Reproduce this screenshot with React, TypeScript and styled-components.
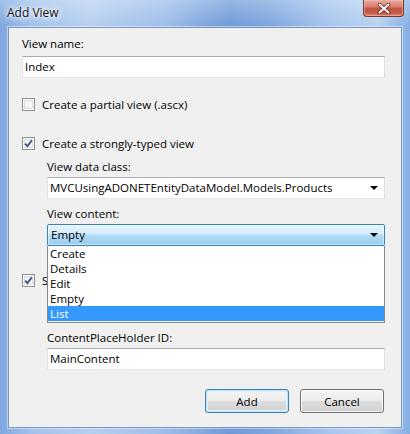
import React from "react";
import styled, { createGlobalStyle } from "styled-components";

const FONT = `"Open Sans", "Noto Sans", "DejaVu Sans", sans-serif`;

const Global = createGlobalStyle`
  html, body { margin: 0; padding: 0; background: #ffffff; }
  body { font-family: ${FONT}; }
`;

const Window = styled.div`
  position: relative;
  width: 410px;
  height: 434px;
  box-sizing: border-box;
  display: flex;
  flex-direction: column;
  overflow: hidden;
  font-family: ${FONT};
  font-size: 11.5px;
  color: #000;
  background:
    linear-gradient(180deg, rgba(255, 255, 255, 0.28) 0px, rgba(255, 255, 255, 0) 26px),
    linear-gradient(90deg, #7fa8df 0%, #a3c2eb 8%, #b6cff0 22%, #9dbde9 40%, #6f9ad8 56%, #7ea6de 66%, #a6c5ee 80%, #b9d2f1 92%, #86aee4 100%);
`;

const TitleBar = styled.div`
  height: 27px;
  flex: none;
  display: flex;
  align-items: flex-start;
  padding: 0 6px 0 7px;
  box-sizing: border-box;
`;

const Title = styled.div`
  line-height: 25px;
  font-size: 12px;
  color: #111;
  text-shadow: 0 0 6px #ffffff, 0 0 3px #ffffff, 0 0 10px rgba(255, 255, 255, 0.9);
`;

const CloseButton = styled.div`
  margin-left: auto;
  width: 41px;
  height: 17px;
  box-sizing: border-box;
  border: 1px solid #7b3a30;
  border-top: none;
  border-radius: 0 0 4px 4px;
  background: linear-gradient(180deg, #e9a99c 0%, #d98373 40%, #c0503c 55%, #c85a45 80%, #dd8470 100%);
  box-shadow: inset 0 0 0 1px rgba(255, 200, 190, 0.45);
  display: flex;
  align-items: center;
  justify-content: center;
`;

const Panel = styled.div`
  margin: 0 8px;
  height: 401px;
  flex: none;
  box-sizing: border-box;
  background: #f0f0f0;
  border: 1px solid #7d97bb;
  box-shadow: 0 0 0 1px rgba(255, 255, 255, 0.45);
  padding: 0 16px 0 13px;
  display: flex;
  flex-direction: column;
`;

const Label = styled.div<{ $mt: number }>`
  margin-top: ${(p) => p.$mt}px;
  line-height: 15px;
  height: 15px;
  white-space: nowrap;
`;

const TextBox = styled.div<{ $mt: number }>`
  margin-top: ${(p) => p.$mt}px;
  height: 22px;
  box-sizing: border-box;
  background: #ffffff;
  border: 1px solid;
  border-color: #abadb3 #dbdfe6 #e3e9ef #e2e3ea;
  padding: 0 2px;
  line-height: 20px;
  white-space: nowrap;
  overflow: hidden;
`;

const SelectBox = styled.div<{ $mt: number }>`
  margin-top: ${(p) => p.$mt}px;
  height: 22px;
  box-sizing: border-box;
  background: #ffffff;
  border: 1px solid;
  border-color: #abadb3 #dbdfe6 #e3e9ef #e2e3ea;
  padding: 0 2px;
  display: flex;
  align-items: center;
  white-space: nowrap;
`;

const SelectText = styled.span`
  flex: 1;
  line-height: 20px;
  overflow: hidden;
`;

const Arrow = styled.span`
  flex: none;
  width: 0;
  height: 0;
  margin-right: 4px;
  border-left: 4px solid transparent;
  border-right: 4px solid transparent;
  border-top: 4px solid #000;
`;

const ComboWrap = styled.div<{ $mt: number }>`
  position: relative;
  margin-top: ${(p) => p.$mt}px;
  height: 22px;
  z-index: 5;
`;

const Combo = styled.div`
  height: 22px;
  box-sizing: border-box;
  border: 1px solid #3c7fb1;
  border-radius: 2px;
  background: linear-gradient(180deg, #e5f4fc 0%, #d3ecfa 45%, #b4ddf5 52%, #97cbee 100%);
  box-shadow: inset 0 0 0 1px rgba(255, 255, 255, 0.5);
  padding: 0 2px 0 3px;
  display: flex;
  align-items: center;
`;

const DropList = styled.div`
  position: absolute;
  top: 22px;
  left: 0;
  right: 0;
  box-sizing: border-box;
  background: #ffffff;
  border: 1px solid #828790;
  border-top: none;
  padding-bottom: 1px;
`;

const ListItem = styled.div<{ $selected?: boolean }>`
  height: 15px;
  line-height: 15px;
  padding-left: 2px;
  background: ${(p) => (p.$selected ? "#3399ff" : "transparent")};
  color: ${(p) => (p.$selected ? "#ffffff" : "#000000")};
`;

const CheckRow = styled.div<{ $mt: number }>`
  margin-top: ${(p) => p.$mt}px;
  height: 16px;
  display: flex;
  align-items: center;
  gap: 7px;
  white-space: nowrap;
`;

const CheckBoxBox = styled.span`
  flex: none;
  width: 13px;
  height: 13px;
  box-sizing: border-box;
  border: 1px solid #8e8f8f;
  background: #f4f4f4;
  box-shadow: inset 0 0 0 1px #ffffff, inset 0 0 0 2px #dcdcdc;
  display: flex;
  align-items: center;
  justify-content: center;
`;

const Indent = styled.div`
  padding-left: 25px;
  display: flex;
  flex-direction: column;
`;

const MasterRow = styled.div<{ $mt: number }>`
  margin-top: ${(p) => p.$mt}px;
  height: 22px;
  display: flex;
  gap: 6px;
`;

const Grow = styled.div`
  flex: 1;
  display: flex;
  flex-direction: column;
`;

const ButtonRow = styled.div<{ $mt: number }>`
  margin-top: ${(p) => p.$mt}px;
  display: flex;
  justify-content: flex-end;
  gap: 11px;
  padding-right: 1px;
`;

const Button = styled.div<{ $default?: boolean; $w?: number; $h?: number }>`
  width: ${(p) => p.$w ?? 84}px;
  height: ${(p) => p.$h ?? 24}px;
  box-sizing: border-box;
  border: 1px solid ${(p) => (p.$default ? "#3c7fb1" : "#707070")};
  border-radius: 3px;
  background: linear-gradient(180deg, #f4f4f4 0%, #ececec 48%, #dedede 52%, #d0d0d0 100%);
  box-shadow: ${(p) =>
    p.$default
      ? "inset 0 0 0 1px #c3e4f6, inset 0 0 0 2px #dff2fc"
      : "inset 0 0 0 1px rgba(255,255,255,0.85)"};
  display: flex;
  align-items: center;
  justify-content: center;
  line-height: 15px;
`;

const CheckMark = () => (
  <svg width="9" height="9" viewBox="0 0 9 9">
    <path d="M1.2 4.6 L3.4 7.2 L7.8 1.4" fill="none" stroke="#3b4f8a" strokeWidth="1.8" strokeLinejoin="round" />
  </svg>
);

const CheckBox = ({ checked }: { checked?: boolean }) => (
  <CheckBoxBox>{checked ? <CheckMark /> : null}</CheckBoxBox>
);

const CloseGlyph = () => (
  <svg width="14" height="11" viewBox="0 0 14 11">
    <path d="M2.5 1.5 L11.5 9.5 M11.5 1.5 L2.5 9.5" stroke="#5a2218" strokeWidth="3.6" strokeLinecap="round" />
    <path d="M2.5 1.5 L11.5 9.5 M11.5 1.5 L2.5 9.5" stroke="#ffffff" strokeWidth="2" strokeLinecap="round" />
  </svg>
);

const items = ["Create", "Details", "Edit", "Empty", "List"];

export default function App() {
  return (
    <>
      <Global />
      <Window>
        <TitleBar>
          <Title>Add View</Title>
          <CloseButton>
            <CloseGlyph />
          </CloseButton>
        </TitleBar>
        <Panel>
          <Label $mt={8}>View name:</Label>
          <TextBox $mt={5}>Index</TextBox>

          <CheckRow $mt={18}>
            <CheckBox />
            <span>Create a partial view (.ascx)</span>
          </CheckRow>

          <CheckRow $mt={23}>
            <CheckBox checked />
            <span>Create a strongly-typed view</span>
          </CheckRow>

          <Indent>
            <Label $mt={8}>View data class:</Label>
            <SelectBox $mt={3}>
              <SelectText>MVCUsingADONETEntityDataModel.Models.Products</SelectText>
              <Arrow />
            </SelectBox>
            <Label $mt={7}>View content:</Label>
            <ComboWrap $mt={3}>
              <Combo>
                <SelectText>Empty</SelectText>
                <Arrow />
              </Combo>
              <DropList>
                {items.map((it) => (
                  <ListItem key={it} $selected={it === "List"}>
                    {it}
                  </ListItem>
                ))}
              </DropList>
            </ComboWrap>
          </Indent>

          <CheckRow $mt={26}>
            <CheckBox checked />
            <span>S</span>
          </CheckRow>

          <Indent>
            <MasterRow $mt={6}>
              <Grow>
                <TextBox $mt={0} />
              </Grow>
              <Button $w={26} $h={22} />
            </MasterRow>
            <Label $mt={14}>ContentPlaceHolder ID:</Label>
            <TextBox $mt={3}>MainContent</TextBox>
          </Indent>

          <ButtonRow $mt={19}>
            <Button $default>Add</Button>
            <Button>Cancel</Button>
          </ButtonRow>
        </Panel>
      </Window>
    </>
  );
}
